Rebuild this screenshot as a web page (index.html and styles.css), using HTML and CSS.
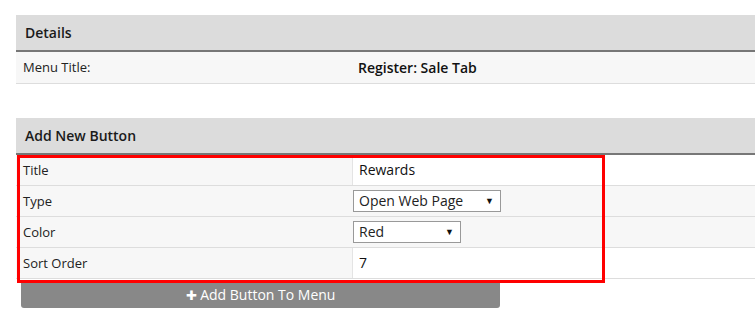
FILE: index.html
```html
<!DOCTYPE html>
<html>
<head>
<meta charset="utf-8">
<link rel="stylesheet" href="styles.css">
</head>
<body>
<div class="page">
  <section class="panel details">
    <div class="panel-head">Details</div>
    <div class="row">
      <div class="label">Menu Title:</div>
      <div class="value strong">Register: Sale Tab</div>
    </div>
  </section>

  <section class="panel add">
    <div class="panel-head">Add New Button</div>
    <div class="rows">
      <div class="row">
        <div class="label">Title</div>
        <div class="value input">Rewards</div>
      </div>
      <div class="row">
        <div class="label">Type</div>
        <div class="value"><span class="select wide">Open Web Page<span class="arrow">&#9660;</span></span></div>
      </div>
      <div class="row">
        <div class="label">Color</div>
        <div class="value"><span class="select narrow">Red<span class="arrow">&#9660;</span></span></div>
      </div>
      <div class="row">
        <div class="label">Sort Order</div>
        <div class="value input">7</div>
      </div>
      <div class="highlight"></div>
    </div>
    <div class="btn"><span class="plus">&#10010;</span> Add Button To Menu</div>
  </section>
</div>
</body>
</html>
```
FILE: styles.css
```css
html, body {
  margin: 0;
  padding: 0;
  background: #fff;
  overflow: hidden;
}
body {
  font-family: "Open Sans", "Liberation Sans", sans-serif;
  color: #222;
}
.page {
  padding: 15px 0 0 16px;
  width: 739px;
}
.panel-head {
  background: #dcdcdc;
  height: 35px;
  line-height: 35px;
  padding-left: 9px;
  font-size: 14px;
  font-weight: 600;
  color: #1a1a1a;
  border-bottom: 2px solid #777;
}
.row {
  display: flex;
  background: #f7f7f7;
  border-bottom: 1px solid #ddd;
  height: 30px;
}
.label {
  width: 329px;
  padding-left: 7px;
  font-size: 13px;
  line-height: 30px;
  color: #222;
}
.value {
  flex: 1;
  font-size: 14px;
  line-height: 30px;
  padding-left: 6px;
}
.value.strong {
  font-weight: 600;
  color: #111;
}
.details .row {
  height: 31px;
}
.details .value {
  line-height: 32px;
}
.add {
  margin-top: 34px;
}
.rows {
  position: relative;
}
.value.input {
  background: #fff;
  border-left: 1px solid #e4e4e4;
  padding-left: 6px;
  color: #111;
}
.select {
  display: inline-flex;
  align-items: center;
  justify-content: space-between;
  box-sizing: border-box;
  height: 22px;
  margin-top: 4px;
  margin-left: -5px;
  padding: 0 6px 0 5px;
  background: #fff;
  border: 1px solid #999;
  font-size: 14px;
  line-height: 20px;
  color: #222;
  vertical-align: top;
}
.select.wide { width: 148px; }
.select.narrow { width: 108px; }
.arrow {
  font-size: 9px;
  color: #111;
}
.highlight {
  position: absolute;
  left: 1px;
  top: 0;
  width: 588px;
  height: 128px;
  box-sizing: border-box;
  border: 3px solid #ff0000;
  pointer-events: none;
}
.btn {
  margin: 2px 0 0 5px;
  width: 479px;
  height: 27px;
  background: #888;
  border-radius: 0 0 3px 3px;
  color: #fff;
  font-size: 14px;
  line-height: 27px;
  text-align: center;
}
.plus {
  font-size: 13px;
}
```
